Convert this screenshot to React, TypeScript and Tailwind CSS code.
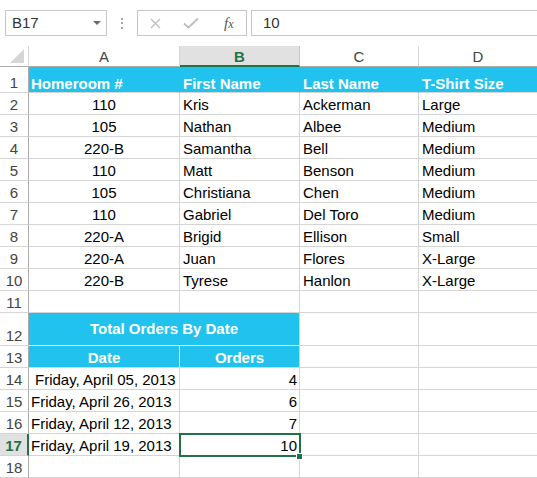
import React from 'react';

// Excel-like sheet: formula bar + grid
const font = { fontFamily: '"Liberation Sans", Arial, sans-serif' };

function Cell({ children, className = '' }: { children?: React.ReactNode; className?: string }) {
  return (
    <div className={`flex items-end leading-[18px] whitespace-nowrap overflow-visible border-r border-b ${className}`}>
      {children}
    </div>
  );
}

function RowHead({ n, active = false }: { n: number; active?: boolean }) {
  return (
    <div
      className={`flex items-end justify-center leading-[18px] border-b border-[#d4d4d4] ${
        active
          ? 'bg-[#e1e1e1] text-[#217346] font-bold border-r-2 border-r-[#217346]'
          : 'bg-white text-[#444] border-r border-r-[#ababab]'
      }`}
    >
      {n}
    </div>
  );
}

const students = [
  ['110', 'Kris', 'Ackerman', 'Large'],
  ['105', 'Nathan', 'Albee', 'Medium'],
  ['220-B', 'Samantha', 'Bell', 'Medium'],
  ['110', 'Matt', 'Benson', 'Medium'],
  ['105', 'Christiana', 'Chen', 'Medium'],
  ['110', 'Gabriel', 'Del Toro', 'Medium'],
  ['220-A', 'Brigid', 'Ellison', 'Small'],
  ['220-A', 'Juan', 'Flores', 'X-Large'],
  ['220-B', 'Tyrese', 'Hanlon', 'X-Large'],
];

const orders = [
  { date: 'Friday, April 05, 2013', qty: 4, pad: 'pl-[6px]' },
  { date: 'Friday, April 26, 2013', qty: 6, pad: 'pl-[2px]' },
  { date: 'Friday, April 12, 2013', qty: 7, pad: 'pl-[2px]' },
  { date: 'Friday, April 19, 2013', qty: 10, pad: 'pl-[2px]' },
];

function FormulaBar() {
  return (
    <div className="flex items-center h-[46px] pl-[5px] bg-white text-[15px] text-[#333]">
      {/* name box */}
      <div className="flex items-center justify-between w-[102px] h-[26px] border border-[#c6c6c6] pl-[6px] pr-[5px]">
        <span>B17</span>
        <svg width="8" height="4" viewBox="0 0 8 4">
          <path d="M0 0 H8 L4 4 Z" fill="#6a6a6a" />
        </svg>
      </div>
      {/* separator dots */}
      <div className="w-[30px] flex flex-col items-center gap-[2.5px]">
        <span className="w-[2px] h-[2px] bg-[#a6a6a6]" />
        <span className="w-[2px] h-[2px] bg-[#a6a6a6]" />
        <span className="w-[2px] h-[2px] bg-[#a6a6a6]" />
      </div>
      {/* cancel / enter / fx */}
      <div className="flex items-center w-[110px] h-[26px] border border-[#c6c6c6] pl-[12px]">
        <svg width="11" height="11" viewBox="0 0 11 11">
          <path d="M1 1 L10 10 M10 1 L1 10" stroke="#bdbdbd" strokeWidth="1.2" />
        </svg>
        <svg className="ml-[22px]" width="16" height="12" viewBox="0 0 16 12">
          <path d="M1 6.5 L5.5 10.5 L15 1.5" stroke="#bdbdbd" strokeWidth="1.8" fill="none" />
        </svg>
        <span
          className="ml-[25px] italic text-[#555] text-[15px] leading-none"
          style={{ fontFamily: '"Liberation Serif", "Times New Roman", serif' }}
        >
          f<span className="text-[12px]">x</span>
        </span>
      </div>
      {/* formula input */}
      <div className="flex items-center flex-1 h-[26px] ml-[4px] border border-r-0 border-[#c6c6c6] pl-[11px]">
        10
      </div>
    </div>
  );
}

export default function App() {
  const grid = 'border-[#d4d4d4]';
  return (
    <div className="w-[537px] h-[478px] overflow-hidden bg-white text-black text-[15px]" style={font}>
      <FormulaBar />

      <div className="grid grid-cols-[29px_151px_120px_119px_118px] grid-rows-[21px_26px_repeat(10,22px)_33px_repeat(6,22px)]">
        {/* column headers */}
        <div className="relative border-r border-b border-r-[#d4d4d4] border-b-[#ababab]">
          <svg className="absolute right-[4px] bottom-[3px]" width="14" height="14" viewBox="0 0 14 14">
            <path d="M14 0 V14 H0 Z" fill="#d6d6d6" />
          </svg>
        </div>
        <div className="flex items-end justify-center leading-[18px] text-[#444] border-r border-b border-r-[#d4d4d4] border-b-[#ababab]">A</div>
        <div className="flex items-end justify-center leading-[17px] font-bold text-[#217346] bg-[#e1e1e1] border-r border-r-[#c6c6c6] border-b-2 border-b-[#217346]">B</div>
        <div className="flex items-end justify-center leading-[18px] text-[#444] border-r border-b border-r-[#d4d4d4] border-b-[#ababab]">C</div>
        <div className="flex items-end justify-center leading-[18px] text-[#444] border-b border-b-[#ababab]">D</div>

        {/* row 1: student table header */}
        <RowHead n={1} />
        <Cell className="!leading-[16px] bg-[#21c3ee] text-white font-bold pl-[2px] border-r-[#21c3ee] border-b-[#d4d4d4]">Homeroom #</Cell>
        <Cell className="!leading-[16px] bg-[#21c3ee] text-white font-bold pl-[3px] border-r-[#21c3ee] border-b-[#d4d4d4]">First Name</Cell>
        <Cell className="!leading-[16px] bg-[#21c3ee] text-white font-bold pl-[3px] border-r-[#21c3ee] border-b-[#d4d4d4]">Last Name</Cell>
        <Cell className="!leading-[16px] bg-[#21c3ee] text-white font-bold pl-[3px] border-r-0 border-b-[#d4d4d4]">T-Shirt Size</Cell>

        {students.map((s, i) => (
          <React.Fragment key={i}>
            <RowHead n={i + 2} />
            <Cell className={`justify-center ${grid}`}>{s[0]}</Cell>
            <Cell className={`pl-[3px] ${grid}`}>{s[1]}</Cell>
            <Cell className={`pl-[3px] ${grid}`}>{s[2]}</Cell>
            <Cell className={`pl-[3px] border-r-0 ${grid}`}>{s[3]}</Cell>
          </React.Fragment>
        ))}

        {/* row 11: empty */}
        <RowHead n={11} />
        <Cell className={grid} />
        <Cell className={grid} />
        <Cell className={grid} />
        <Cell className={`border-r-0 ${grid}`} />

        {/* row 12: merged title */}
        <RowHead n={12} />
        <div className="col-span-2 flex items-center justify-center bg-[#21c3ee] text-white font-bold border-b border-b-white border-r border-r-[#d4d4d4]">
          Total Orders By Date
        </div>
        <Cell className={grid} />
        <Cell className={`border-r-0 ${grid}`} />

        {/* row 13: order headers */}
        <RowHead n={13} />
        <Cell className="justify-center bg-[#21c3ee] text-white font-bold border-r-white border-b-[#d4d4d4]">Date</Cell>
        <Cell className="justify-center bg-[#21c3ee] text-white font-bold border-r-[#d4d4d4] border-b-[#d4d4d4]">Orders</Cell>
        <Cell className={grid} />
        <Cell className={`border-r-0 ${grid}`} />

        {orders.map((o, i) => {
          const selected = i === orders.length - 1;
          return (
            <React.Fragment key={o.date}>
              <RowHead n={14 + i} active={selected} />
              <Cell className={`${o.pad} ${grid}`}>{o.date}</Cell>
              <Cell className={`relative justify-end pr-[2px] ${grid}`}>
                {o.qty}
                {selected && (
                  <>
                    <span className="absolute z-10 left-[-1px] top-[-1px] w-[122px] h-[24px] border-2 border-[#217346] pointer-events-none" />
                    <span className="absolute z-20 left-[116px] top-[19px] w-[7px] h-[7px] bg-[#217346] border border-white" />
                  </>
                )}
              </Cell>
              <Cell className={grid} />
              <Cell className={`border-r-0 ${grid}`} />
            </React.Fragment>
          );
        })}

        {/* row 18: empty */}
        <RowHead n={18} />
        <Cell className={grid} />
        <Cell className={grid} />
        <Cell className={grid} />
        <Cell className={`border-r-0 ${grid}`} />
      </div>
    </div>
  );
}
